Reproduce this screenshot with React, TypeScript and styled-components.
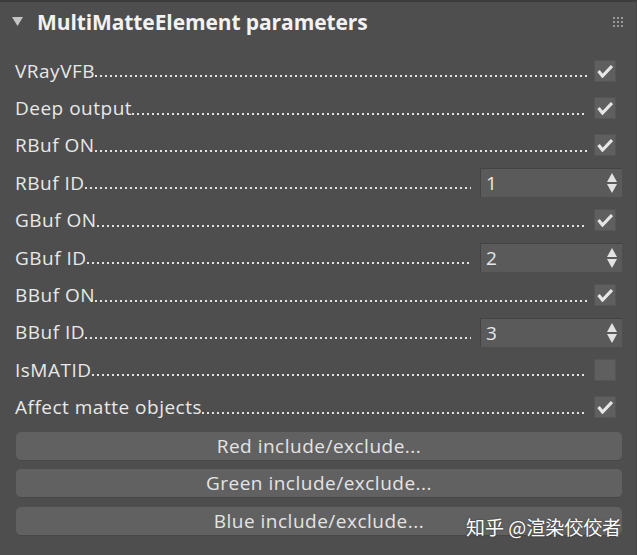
import React from "react";
import styled, { createGlobalStyle } from "styled-components";

const Global = createGlobalStyle`
  html, body { margin: 0; padding: 0; background: #4e4e4e; }
  body { font-family: "Open Sans", "Noto Sans", sans-serif; }
`;

const Panel = styled.div`
  position: relative;
  width: 637px;
  height: 555px;
  box-sizing: border-box;
  background: #4e4e4e;
  border-top: 2px solid #3c3c3c;
  border-right: 1px solid #474747;
  overflow: hidden;
  color: #e6e6e6;
`;

const Header = styled.div`
  display: flex;
  align-items: center;
  height: 40px;
  padding: 0 13px 0 12px;
`;

const Title = styled.div`
  flex: 1;
  margin-left: 14px;
  font-size: 21px;
  font-weight: 700;
  color: #f2f2f2;
  letter-spacing: -0.1px;
`;

const Grip = styled.div`
  display: grid;
  grid-template-columns: repeat(3, 2px);
  grid-auto-rows: 2px;
  gap: 2px;
  span { background: #9a9a9a; }
`;

const Body = styled.div`
  display: flex;
  flex-direction: column;
  padding: 10px 14px 0 15px;
`;

const Row = styled.div`
  display: flex;
  align-items: center;
  height: 37.4px;
`;

const Label = styled.span`
  font-size: 19px;
  letter-spacing: 0.5px;
  white-space: nowrap;
  color: #e8e8e8;
`;

const Leader = styled.span<{ $gap: number }>`
  flex: 1;
  height: 2px;
  margin-top: 11px;
  margin-right: ${(p) => p.$gap}px;
  background-image: linear-gradient(to right, #e2e2e2 0 2px, transparent 2px 5px);
  background-size: 5px 2px;
  background-repeat: repeat-x;
`;

const Check = styled.div`
  width: 22px;
  height: 22px;
  box-sizing: border-box;
  margin-right: 6px;
  background: #5f5f5f;
  border: 1px solid #555;
  display: flex;
  align-items: center;
  justify-content: center;
`;

const Spinner = styled.div`
  width: 142px;
  height: 29px;
  box-sizing: border-box;
  background: #5a5a5a;
  border-top: 1px solid #434343;
  border-left: 1px solid #434343;
  display: flex;
  align-items: center;
  padding: 0 3px 0 5px;
`;

const SpinValue = styled.span`
  flex: 1;
  font-size: 19px;
  color: #e8e8e8;
`;

const Buttons = styled.div`
  display: flex;
  flex-direction: column;
  gap: 8.5px;
  padding: 6px 0 0 1px;
`;

const Button = styled.div`
  height: 29px;
  box-sizing: border-box;
  border-radius: 5px;
  background: #616161;
  border-bottom: 1px solid #474747;
  display: flex;
  align-items: center;
  justify-content: center;
  font-size: 19px;
  letter-spacing: 0.5px;
  color: #e4e4e4;
`;

const Watermark = styled.div`
  position: absolute;
  left: 466px;
  top: 511px;
  font-family: "Noto Sans CJK SC", sans-serif;
  font-size: 19px;
  color: #ffffff;
  text-shadow: 0 0 2px rgba(0,0,0,0.5);
  white-space: nowrap;
`;

const Tick = () => (
  <svg width="16" height="14" viewBox="0 0 16 14">
    <path d="M1.5 7 L5.5 12 L15 2" fill="none" stroke="#e6e6e6" strokeWidth="3.2" strokeLinejoin="miter" />
  </svg>
);

const Arrows = () => (
  <svg width="14" height="22" viewBox="0 0 14 22">
    <polygon points="7,1 12,10 2,10" fill="#e2e2e2" />
    <polygon points="2,12 12,12 7,21" fill="#e2e2e2" />
  </svg>
);

type Item = { label: string; kind: "check" | "spin"; value?: boolean | number };

const items: Item[] = [
  { label: "VRayVFB", kind: "check", value: true },
  { label: "Deep output", kind: "check", value: true },
  { label: "RBuf ON", kind: "check", value: true },
  { label: "RBuf ID", kind: "spin", value: 1 },
  { label: "GBuf ON", kind: "check", value: true },
  { label: "GBuf ID", kind: "spin", value: 2 },
  { label: "BBuf ON", kind: "check", value: true },
  { label: "BBuf ID", kind: "spin", value: 3 },
  { label: "IsMATID", kind: "check", value: false },
  { label: "Affect matte objects", kind: "check", value: true },
];

export default function App() {
  return (
    <>
      <Global />
      <Panel>
        <Header>
          <svg width="11" height="10" viewBox="0 0 11 10">
            <polygon points="0,0 11,0 5.5,9" fill="#c4c4c4" />
          </svg>
          <Title>MultiMatteElement parameters</Title>
          <Grip>
            {Array.from({ length: 9 }).map((_, i) => (
              <span key={i} />
            ))}
          </Grip>
        </Header>
        <Body>
          {items.map((it) => (
            <Row key={it.label}>
              <Label>{it.label}</Label>
              <Leader $gap={it.kind === "check" ? 7 : 9} />
              {it.kind === "check" ? (
                <Check>{it.value ? <Tick /> : null}</Check>
              ) : (
                <Spinner>
                  <SpinValue>{it.value as number}</SpinValue>
                  <Arrows />
                </Spinner>
              )}
            </Row>
          ))}
          <Buttons>
            <Button>Red include/exclude...</Button>
            <Button>Green include/exclude...</Button>
            <Button>Blue include/exclude...</Button>
          </Buttons>
        </Body>
        <Watermark>知乎 @渲染佼佼者</Watermark>
      </Panel>
    </>
  );
}
